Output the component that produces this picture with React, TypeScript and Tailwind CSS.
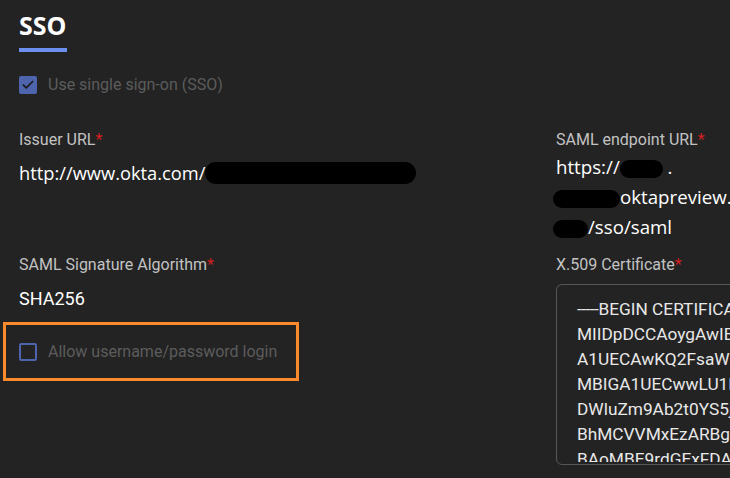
import { Check } from "lucide-react";

const certLines = [
  "MIIDpDCCAoygAwIBAgIGAW",
  "A1UECAwKQ2FsaWZvcm5pYTEW",
  "MBIGA1UECwwLU1NPUHJvdmlk",
  "DWluZm9Ab2t0YS5jb20wHhcN",
  "BhMCVVMxEzARBgNVBAgMCkNh",
  "BAoMBE9rdGExFDASBgNVBAsM",
];

function Label({ children }: { children: React.ReactNode }) {
  return (
    <div className="text-[16px] leading-5 text-[#c2c2c2]">
      {children}
      <span className="text-[#d21f1f]">*</span>
    </div>
  );
}

// redaction marks over private parts of the URLs
function Blob({ w, h = 20 }: { w: number; h?: number }) {
  return (
    <span
      className="inline-block align-middle rounded-full bg-black"
      style={{ width: w, height: h }}
    />
  );
}

export default function App() {
  return (
    <div className="w-[730px] h-[478px] overflow-hidden bg-[#232323] font-['Roboto',sans-serif]">
      <div className="pl-[19px] pt-[9px]">
        <h1 className="text-[25px] leading-8 font-bold text-white font-['Open_Sans',sans-serif]">SSO</h1>
        <div className="mt-[7px] h-[4px] w-[48px] bg-[#6d8ff0]" />

        <label className="mt-[21px] flex items-center gap-[11px]">
          <span className="flex h-[18px] w-[18px] items-center justify-center rounded-[2px] bg-[#4e64ad]">
            <Check className="h-[14px] w-[14px] text-[#1c1c1c]" strokeWidth={3} />
          </span>
          <span className="text-[16px] text-[#5c5c5c]">Use single sign-on (SSO)</span>
        </label>
      </div>

      <div className="mt-[33px] grid grid-cols-[537px_1fr] pl-[19px]">
        {/* row 1 */}
        <div>
          <Label>Issuer URL</Label>
          <div className="mt-[9px] flex items-center text-[18.3px] leading-7 text-white font-['Open_Sans',sans-serif]">
            http://www.okta.com/
            <Blob w={211} h={22} />
          </div>
        </div>
        <div className="min-w-0">
          <Label>SAML endpoint URL</Label>
          <div className="mt-[2px] whitespace-nowrap text-[18.7px] leading-[30px] text-white font-['Open_Sans',sans-serif]">
            <div>
              https://<Blob w={43} h={18} /> <span>.</span>
            </div>
            <div className="-ml-[3px]">
              <Blob w={67} h={18} />oktapreview.com/app/
            </div>
            <div className="-ml-[3px]">
              <Blob w={35} h={18} />/sso/saml
            </div>
          </div>
        </div>

        {/* row 2 */}
        <div className="mt-[13px]">
          <Label>SAML Signature Algorithm</Label>
          <div className="mt-[12px] text-[18px] leading-6 text-white">SHA256</div>

          <div className="mt-[11px] -ml-[16px] flex h-[59px] w-[296px] items-center gap-[11px] border-[3px] border-[#f98b2d] pl-[13px]">
            <span className="h-[18px] w-[18px] rounded-[2px] border-2 border-[#4e64ad]" />
            <span className="text-[16px] text-[#5c5c5c]">Allow username/password login</span>
          </div>
        </div>
        <div className="mt-[13px] min-w-0">
          <Label>X.509 Certificate</Label>
          <div className="mt-[9px] h-[181px] w-[240px] rounded-[6px] border border-[#575757] pl-[20px] pt-[12px] text-[17.3px] leading-[25px] text-[#e8e8e8] whitespace-nowrap">
            <div className="h-[165px] overflow-hidden">
              <div>
                <span className="tracking-[-0.5px]">-----</span>BEGIN CERTIFICATE-----
              </div>
              {certLines.map((l) => (
                <div key={l}>{l}</div>
              ))}
            </div>
          </div>
        </div>
      </div>
    </div>
  );
}
